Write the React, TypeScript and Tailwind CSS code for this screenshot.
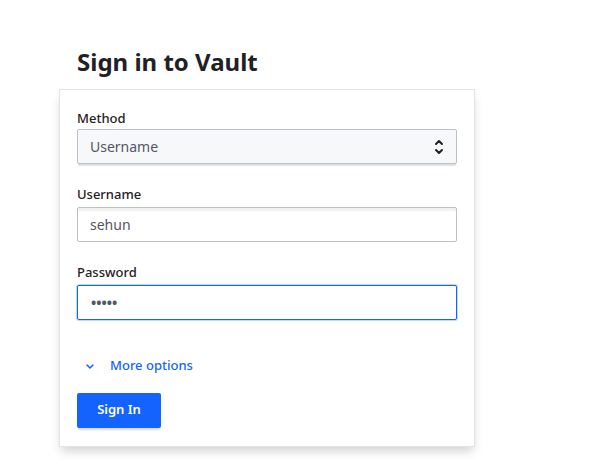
import React from "react";

export default function App() {
  return (
    <div className="min-h-[468px] w-[591px] bg-white font-['Noto_Sans',sans-serif] text-[#1f2124]">
      <div className="pl-[59px] pt-[45px]">
        <h1 className="pl-[18px] text-[24px] font-bold leading-[34px] text-[#1f2124]">Sign in to Vault</h1>
        <div className="mt-[10px] w-[416px] border border-[#e1e3e6] bg-white px-[17px] pb-[18px] pt-[18px] shadow-[0_6px_10px_-2px_rgba(0,0,0,0.18)]">
          <label className="block text-[13px] font-medium leading-[20px]">Method</label>
          <div className="mt-[1px] flex h-[35px] items-center justify-between rounded-[2px] border border-[#bac1cc] bg-[#f7f8fa] pl-[12px] pr-[12px] shadow-[0_3px_1px_-1px_rgba(0,0,0,0.12)]">
            <span className="text-[14px] text-[#525761]">Username</span>
            <svg width="10" height="18" viewBox="0 0 10 18" fill="none" stroke="#1f2124" strokeWidth="2" strokeLinecap="round" strokeLinejoin="round">
              <path d="M2 6 L5 3 L8 6" />
              <path d="M2 12 L5 15 L8 12" />
            </svg>
          </div>
          <label className="mt-[20px] block text-[13px] font-medium leading-[20px]">Username</label>
          <div className="mt-[3px] flex h-[35px] items-center rounded-[2px] border border-[#bac1cc] bg-white pl-[12px] shadow-[inset_0_4px_1px_-1px_rgba(0,0,0,0.06)]">
            <span className="text-[14px] text-[#525761]">sehun</span>
          </div>
          <label className="mt-[20px] block text-[13px] font-medium leading-[20px]">Password</label>
          <div className="mt-[3px] flex h-[35px] items-center rounded-[2px] border border-[#1563ff] bg-white pl-[13px] shadow-[0_0_0_1px_rgba(21,99,255,0.25)]">
            <span className="text-[14px] font-bold tracking-[0px] text-[#525761]">•••••</span>
          </div>
          <div className="mt-[36px] flex items-center pl-[8px]">
            <svg width="10" height="8" viewBox="0 0 10 8" fill="none" stroke="#1563ff" strokeWidth="1.5" strokeLinecap="round" strokeLinejoin="round">
              <path d="M2 3 L5 6 L8 3" />
            </svg>
            <span className="ml-[15px] text-[13px] font-medium text-[#1563ff]">More options</span>
          </div>
          <button className="mt-[17px] h-[35px] w-[84px] rounded-[2px] bg-[#1563ff] text-[13px] font-semibold text-white shadow-[0_3px_2px_-1px_rgba(0,0,0,0.15)]">
            Sign In
          </button>
        </div>
      </div>
    </div>
  );
}
